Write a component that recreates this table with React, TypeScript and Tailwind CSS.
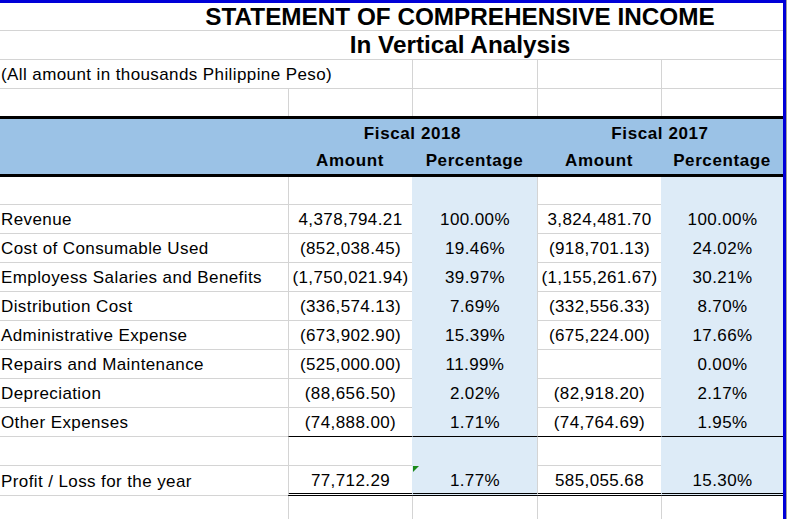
const rows: string[][] = [
  ["Revenue", "4,378,794.21", "100.00%", "3,824,481.70", "100.00%"],
  ["Cost of Consumable Used", "(852,038.45)", "19.46%", "(918,701.13)", "24.02%"],
  ["Employess Salaries and Benefits", "(1,750,021.94)", "39.97%", "(1,155,261.67)", "30.21%"],
  ["Distribution Cost", "(336,574.13)", "7.69%", "(332,556.33)", "8.70%"],
  ["Administrative Expense", "(673,902.90)", "15.39%", "(675,224.00)", "17.66%"],
  ["Repairs and Maintenance", "(525,000.00)", "11.99%", "", "0.00%"],
  ["Depreciation", "(88,656.50)", "2.02%", "(82,918.20)", "2.17%"],
  ["Other Expenses", "(74,888.00)", "1.71%", "(74,764.69)", "1.95%"],
];

// column cells, grid lines drawn as left/bottom borders like the sheet
const colA = "w-[288px] shrink-0 flex items-center pl-[1px] pt-[1px] border-b border-b-[#d4d4d4]";
const colB = "w-[124px] shrink-0 flex items-center justify-center pt-[1px] border-l border-b border-l-[#d4d4d4] border-b-[#d4d4d4]";
const colC = "w-[125px] shrink-0 flex items-center justify-center pt-[1px] border-l border-b border-l-[#ddebf7] border-b-[#ddebf7] bg-[#ddebf7]";
const colD = "w-[124px] shrink-0 flex items-center justify-center pt-[1px] border-l border-b border-l-[#d4d4d4] border-b-[#d4d4d4]";
const colE = "w-[122px] shrink-0 flex items-center justify-center pt-[1px] border-l border-b border-l-[#ddebf7] border-b-[#ddebf7] bg-[#ddebf7]";

function DataRow({ cells, last }: { cells: string[]; last?: boolean }) {
  return (
    <div className="flex h-[29px]">
      <div className={colA}>{cells[0]}</div>
      <div className={last ? colB + " !border-b-black" : colB}>{cells[1]}</div>
      <div className={last ? colC + " !border-b-black" : colC}>{cells[2]}</div>
      <div className={last ? colD + " !border-b-black" : colD}>{cells[3]}</div>
      <div className={last ? colE + " !border-b-black" : colE}>{cells[4]}</div>
    </div>
  );
}

export default function App() {
  return (
    <div className="w-[787px] h-[519px] overflow-hidden bg-white border-r border-r-[#a0a0a0] text-black text-[17px] tracking-[0.4px] leading-[19px] font-['Liberation_Sans',Arial,sans-serif]">
      <div className="w-[786px] h-[519px] border-t-[3px] border-r-[3px] border-[#0000d8]">
        {/* title rows */}
        <div className="flex h-[28px] items-center border-b border-b-[#d4d4d4]">
          <div className="w-[920px] shrink-0 text-center text-[24.3px] font-bold tracking-normal leading-none pt-[1px]">
            STATEMENT OF COMPREHENSIVE INCOME
          </div>
        </div>
        <div className="flex h-[29px] items-center border-b border-b-[#d4d4d4]">
          <div className="w-[920px] shrink-0 text-center text-[24.3px] font-bold tracking-normal leading-none pt-[1px]">
            In Vertical Analysis
          </div>
        </div>
        <div className="flex h-[29px]">
          <div className="w-[412px] shrink-0 flex items-center pl-[1px] pt-[1px] border-b border-b-[#d4d4d4] whitespace-nowrap">
            (All amount in thousands Philippine Peso)
          </div>
          <div className="w-[125px] shrink-0 border-l border-b border-[#d4d4d4]" />
          <div className="w-[124px] shrink-0 border-l border-b border-[#d4d4d4]" />
          <div className="w-[122px] shrink-0 border-l border-b border-[#d4d4d4]" />
        </div>
        <div className="flex h-[27px]">
          <div className="w-[288px] shrink-0" />
          <div className="w-[124px] shrink-0 border-l border-[#d4d4d4]" />
          <div className="w-[125px] shrink-0 border-l border-[#d4d4d4]" />
          <div className="w-[124px] shrink-0 border-l border-[#d4d4d4]" />
          <div className="w-[122px] shrink-0 border-l border-[#d4d4d4]" />
        </div>

        {/* header band */}
        <div className="w-[783px] border-y-[3px] border-black bg-[#9bc2e6] font-bold tracking-[0.6px]">
          <div className="flex h-[27px] items-center pt-[1px]">
            <div className="w-[288px] shrink-0" />
            <div className="w-[249px] shrink-0 text-center">Fiscal 2018</div>
            <div className="w-[246px] shrink-0 text-center">Fiscal 2017</div>
          </div>
          <div className="flex h-[28px] items-center pt-[1px]">
            <div className="w-[288px] shrink-0" />
            <div className="w-[124px] shrink-0 text-center">Amount</div>
            <div className="w-[125px] shrink-0 text-center">Percentage</div>
            <div className="w-[124px] shrink-0 text-center">Amount</div>
            <div className="w-[122px] shrink-0 text-center">Percentage</div>
          </div>
        </div>

        {/* spacer row */}
        <div className="flex h-[28px]">
          <div className={colA} />
          <div className={colB} />
          <div className={colC} />
          <div className={colD} />
          <div className={colE} />
        </div>

        {rows.map((r, i) => (
          <DataRow key={r[0]} cells={r} last={i === rows.length - 1} />
        ))}

        <div className="flex h-[29px]">
          <div className={colA} />
          <div className={colB} />
          <div className={colC} />
          <div className={colD} />
          <div className={colE} />
        </div>

        {/* totals row */}
        <div className="flex h-[30px]">
          <div className={colA}>Profit / Loss for the year</div>
          <div className="w-[124px] shrink-0 flex items-center justify-center pt-[1px] border-l border-l-[#d4d4d4] border-b-[3px] border-double border-b-black">
            77,712.29
          </div>
          <div className="relative w-[125px] shrink-0 flex items-center justify-center pt-[1px] border-l border-l-[#ddebf7] bg-[#ddebf7] border-b-[3px] border-double border-b-black">
            <span className="absolute left-0 top-0 w-0 h-0 border-t-[6px] border-t-[#1a8a1a] border-r-[6px] border-r-transparent" />
            1.77%
          </div>
          <div className="w-[124px] shrink-0 flex items-center justify-center pt-[1px] border-l border-l-[#d4d4d4] border-b-[3px] border-double border-b-black">
            585,055.68
          </div>
          <div className="w-[122px] shrink-0 flex items-center justify-center pt-[1px] border-l border-l-[#ddebf7] bg-[#ddebf7] border-b-[3px] border-double border-b-black">
            15.30%
          </div>
        </div>

        <div className="flex h-[30px]">
          <div className="w-[288px] shrink-0" />
          <div className="w-[124px] shrink-0 border-l border-[#d4d4d4]" />
          <div className="w-[125px] shrink-0 border-l border-[#d4d4d4]" />
          <div className="w-[124px] shrink-0 border-l border-[#d4d4d4]" />
          <div className="w-[122px] shrink-0 border-l border-[#d4d4d4]" />
        </div>
      </div>
    </div>
  );
}
